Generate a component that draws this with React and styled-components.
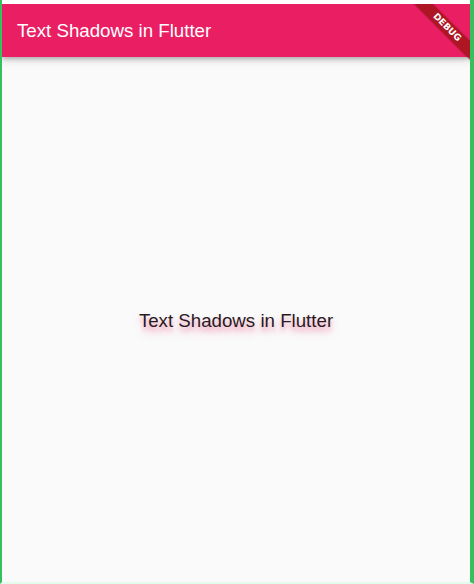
import React from "react";
import styled, { createGlobalStyle } from "styled-components";

const GlobalStyle = createGlobalStyle`
  html, body {
    margin: 0;
    padding: 0;
    background: #ffffff;
  }
  * {
    box-sizing: border-box;
  }
`;

const Frame = styled.div`
  width: 474px;
  height: 584px;
  display: flex;
  flex-direction: column;
  padding-top: 4px;
  border-left: 2px solid #35c05e;
  border-right: 4px solid #35c05e;
  border-bottom: 2px solid #e3fbea;
  background: #ffffff;
  font-family: "Liberation Sans", Arial, sans-serif;
`;

const Screen = styled.div`
  flex: 1;
  display: flex;
  flex-direction: column;
  background: #fafafa;
  position: relative;
  overflow: hidden;
`;

const AppBar = styled.header`
  height: 53px;
  flex: 0 0 53px;
  display: flex;
  align-items: center;
  padding-left: 15px;
  background: #e91e63;
  box-shadow: 0 2px 4px rgba(0, 0, 0, 0.22), 0 4px 8px rgba(0, 0, 0, 0.12);
  position: relative;
  z-index: 1;
`;

const Title = styled.h1`
  margin: 0;
  font-size: 18.7px;
  font-weight: 400;
  color: #ffffff;
`;

const Body = styled.main`
  flex: 1;
  display: flex;
  align-items: center;
  justify-content: center;
  padding-top: 2px;
`;

const ShadowText = styled.p`
  margin: 0;
  font-size: 18.7px;
  color: #2a1a22;
  text-shadow: 0 4px 4px rgba(238, 110, 155, 0.5),
    0 6px 8px rgba(238, 110, 155, 0.35);
`;

const Banner = styled.div`
  position: absolute;
  top: 17px;
  right: -29px;
  width: 104px;
  height: 13px;
  background: rgba(160, 20, 20, 0.8);
  transform: rotate(45deg);
  display: flex;
  align-items: center;
  justify-content: center;
  z-index: 2;
  box-shadow: 0 0 2px rgba(0, 0, 0, 0.3);
`;

const BannerText = styled.span`
  font-family: "DejaVu Sans", "Liberation Sans", sans-serif;
  font-size: 9px;
  font-weight: 900;
  color: #ffffff;
  line-height: 1;
`;

export default function App() {
  return (
    <>
      <GlobalStyle />
      <Frame>
        <Screen>
          <AppBar>
            <Title>Text Shadows in Flutter</Title>
          </AppBar>
          <Body>
            <ShadowText>Text Shadows in Flutter</ShadowText>
          </Body>
          <Banner>
            <BannerText>DEBUG</BannerText>
          </Banner>
        </Screen>
      </Frame>
    </>
  );
}
